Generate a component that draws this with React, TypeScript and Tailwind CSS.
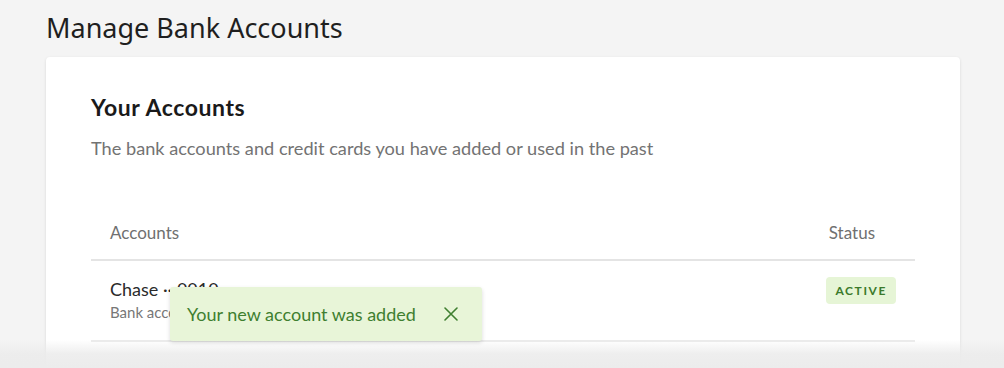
import React from "react";

export default function App() {
  return (
    <div className="relative w-[1004px] h-[368px] overflow-hidden bg-[#f4f4f4]" style={{ fontFamily: "Lato, 'Noto Sans', sans-serif" }}>
      <div className="pl-[46px] pr-[44px] pt-[11px]">
        <h1 className="text-[27px] leading-[34px] text-[#1f1f1f] font-normal" style={{ fontFamily: "'Noto Sans', sans-serif" }}>
          Manage Bank Accounts
        </h1>
        <div className="mt-[12px] bg-white rounded-[4px] shadow-[0_1px_3px_rgba(0,0,0,0.12)] px-[45px] pt-[36px] pb-[40px]">
          <h2 className="text-[23px] leading-[28px] font-bold tracking-[0.6px] text-[#1a1a1a]">Your Accounts</h2>
          <p className="mt-[15px] text-[18.2px] leading-[24px] text-[#737373]">
            The bank accounts and credit cards you have added or used in the past
          </p>
          <div className="mt-[62px]">
            <div className="flex justify-between px-[19px] pb-[15px] border-b-2 border-[#e4e4e4] text-[17px] leading-[22px] text-[#707070]">
              <span>Accounts</span>
              <span className="pr-[21px]">Status</span>
            </div>
            <div className="flex justify-between items-start pl-[19px] pr-[19px] pt-[17px] pb-[17px] border-b-2 border-[#ebebeb]">
              <div>
                <div className="text-[18px] leading-[22px] text-[#2a2a2a]">Chase ·· 0010</div>
                <div className="mt-[1px] text-[15px] leading-[22px] text-[#777]">Bank account</div>
              </div>
              <span className="mt-[-1px] inline-block bg-[#e6f5d6] text-[#3b7a2b] text-[12px] font-bold tracking-[1.6px] leading-[27px] px-[9px] rounded-[4px]">
                ACTIVE
              </span>
            </div>
          </div>
        </div>
      </div>
      <div className="absolute left-[170px] top-[287px] w-[312px] h-[54px] bg-[#e8f5d8] rounded-[3px] shadow-[0_2px_4px_rgba(0,0,0,0.15)] flex items-center justify-between pl-[17px] pr-[24px]">
        <span className="text-[18px] text-[#3f7f30]">Your new account was added</span>
        <svg width="14" height="14" viewBox="0 0 14 14" fill="none" stroke="#3f7f30" strokeWidth="1.6" strokeLinecap="round">
          <path d="M1 1L13 13M13 1L1 13" />
        </svg>
      </div>
      <div className="absolute left-0 right-0 bottom-0 h-[28px] bg-gradient-to-b from-[rgba(235,235,235,0)] via-[rgba(235,235,235,0.85)] to-[#ececec]" />
    </div>
  );
}
